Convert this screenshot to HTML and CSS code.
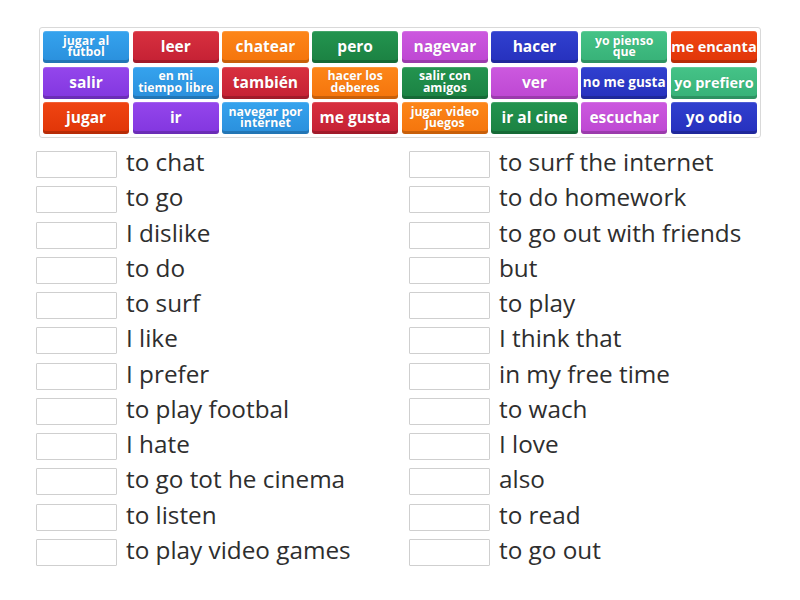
FILE: index.html
```html
<!DOCTYPE html>
<html>
<head>
<meta charset="utf-8">
<link rel="stylesheet" href="styles.css">
</head>
<body>
<div class="bank">
  <div class="tile blue two">jugar al<br>fútbol</div>
  <div class="tile red">leer</div>
  <div class="tile orange">chatear</div>
  <div class="tile green">pero</div>
  <div class="tile magenta">nagevar</div>
  <div class="tile dblue">hacer</div>
  <div class="tile teal two">yo pienso<br>que</div>
  <div class="tile rorange small">me encanta</div>

  <div class="tile purple">salir</div>
  <div class="tile blue two">en mi<br>tiempo libre</div>
  <div class="tile red">también</div>
  <div class="tile orange two">hacer los<br>deberes</div>
  <div class="tile green two">salir con<br>amigos</div>
  <div class="tile magenta">ver</div>
  <div class="tile dblue xsmall">no me gusta</div>
  <div class="tile teal small">yo prefiero</div>

  <div class="tile rorange">jugar</div>
  <div class="tile purple">ir</div>
  <div class="tile blue two">navegar por<br>internet</div>
  <div class="tile red">me gusta</div>
  <div class="tile orange two">jugar video<br>juegos</div>
  <div class="tile green">ir al cine</div>
  <div class="tile magenta">escuchar</div>
  <div class="tile dblue">yo odio</div>
</div>

<div class="lists">
  <div class="col">
    <div class="row"><span class="box"></span><span class="txt">to chat</span></div>
    <div class="row"><span class="box"></span><span class="txt">to go</span></div>
    <div class="row"><span class="box"></span><span class="txt">I dislike</span></div>
    <div class="row"><span class="box"></span><span class="txt">to do</span></div>
    <div class="row"><span class="box"></span><span class="txt">to surf</span></div>
    <div class="row"><span class="box"></span><span class="txt">I like</span></div>
    <div class="row"><span class="box"></span><span class="txt">I prefer</span></div>
    <div class="row"><span class="box"></span><span class="txt">to play footbal</span></div>
    <div class="row"><span class="box"></span><span class="txt">I hate</span></div>
    <div class="row"><span class="box"></span><span class="txt">to go tot he cinema</span></div>
    <div class="row"><span class="box"></span><span class="txt">to listen</span></div>
    <div class="row"><span class="box"></span><span class="txt">to play video games</span></div>
  </div>
  <div class="col">
    <div class="row"><span class="box"></span><span class="txt">to surf the internet</span></div>
    <div class="row"><span class="box"></span><span class="txt">to do homework</span></div>
    <div class="row"><span class="box"></span><span class="txt">to go out with friends</span></div>
    <div class="row"><span class="box"></span><span class="txt">but</span></div>
    <div class="row"><span class="box"></span><span class="txt">to play</span></div>
    <div class="row"><span class="box"></span><span class="txt">I think that</span></div>
    <div class="row"><span class="box"></span><span class="txt">in my free time</span></div>
    <div class="row"><span class="box"></span><span class="txt">to wach</span></div>
    <div class="row"><span class="box"></span><span class="txt">I love</span></div>
    <div class="row"><span class="box"></span><span class="txt">also</span></div>
    <div class="row"><span class="box"></span><span class="txt">to read</span></div>
    <div class="row"><span class="box"></span><span class="txt">to go out</span></div>
  </div>
</div>
</body>
</html>
```
FILE: styles.css
```css
html, body {
  margin: 0;
  padding: 0;
  background: #ffffff;
  font-family: "Open Sans", "DejaVu Sans", sans-serif;
}

.bank {
  margin: 27px 0 0 39px;
  width: 722px;
  box-sizing: border-box;
  border: 1px solid #d9d9d9;
  border-radius: 3px;
  padding: 3px;
  display: grid;
  grid-template-columns: repeat(8, 1fr);
  grid-auto-rows: 32px;
  gap: 3.5px;
}

.tile {
  display: flex;
  align-items: center;
  justify-content: center;
  text-align: center;
  color: #ffffff;
  font-weight: 700;
  font-size: 15.5px;
  line-height: 1.1;
  border-radius: 3px;
  white-space: nowrap;
  overflow: hidden;
  text-shadow: 0 0 1px rgba(0,0,0,0.15);
  box-shadow: inset 0 -3px 0 rgba(0,0,0,0.18), inset 0 1px 0 rgba(255,255,255,0.15);
}

.tile.two {
  font-size: 12.3px;
  line-height: 11.5px;
  padding-bottom: 2px;
}
.tile.small { font-size: 14.5px; }
.tile.xsmall { font-size: 13.5px; }

.blue    { background: linear-gradient(#35a3ee, #2a8fdc); }
.red     { background: linear-gradient(#d8303f, #c42034); }
.orange  { background: linear-gradient(#fd8619, #f4740c); }
.green   { background: linear-gradient(#23944f, #1b8142); }
.magenta { background: linear-gradient(#cc59df, #bd47d2); }
.dblue   { background: linear-gradient(#3040cf, #2630bd); }
.teal    { background: linear-gradient(#45c387, #37b177); }
.rorange { background: linear-gradient(#f04512, #e03508); }
.purple  { background: linear-gradient(#9446ec, #8236df); }

.lists {
  margin: 13px 0 0 36px;
  display: grid;
  grid-template-columns: 373px 373px;
}

.col {
  display: flex;
  flex-direction: column;
  gap: 8.27px;
}

.row {
  display: flex;
  align-items: center;
  height: 27px;
}

.box {
  flex: 0 0 auto;
  width: 81px;
  height: 27px;
  box-sizing: border-box;
  border: 1px solid #cfcfcf;
  border-radius: 1px;
  background: #ffffff;
}

.txt {
  margin-left: 9px;
  font-size: 24.3px;
  color: #2e2e2e;
  white-space: nowrap;
  line-height: 27px;
  position: relative;
  top: -3px;
}
```
